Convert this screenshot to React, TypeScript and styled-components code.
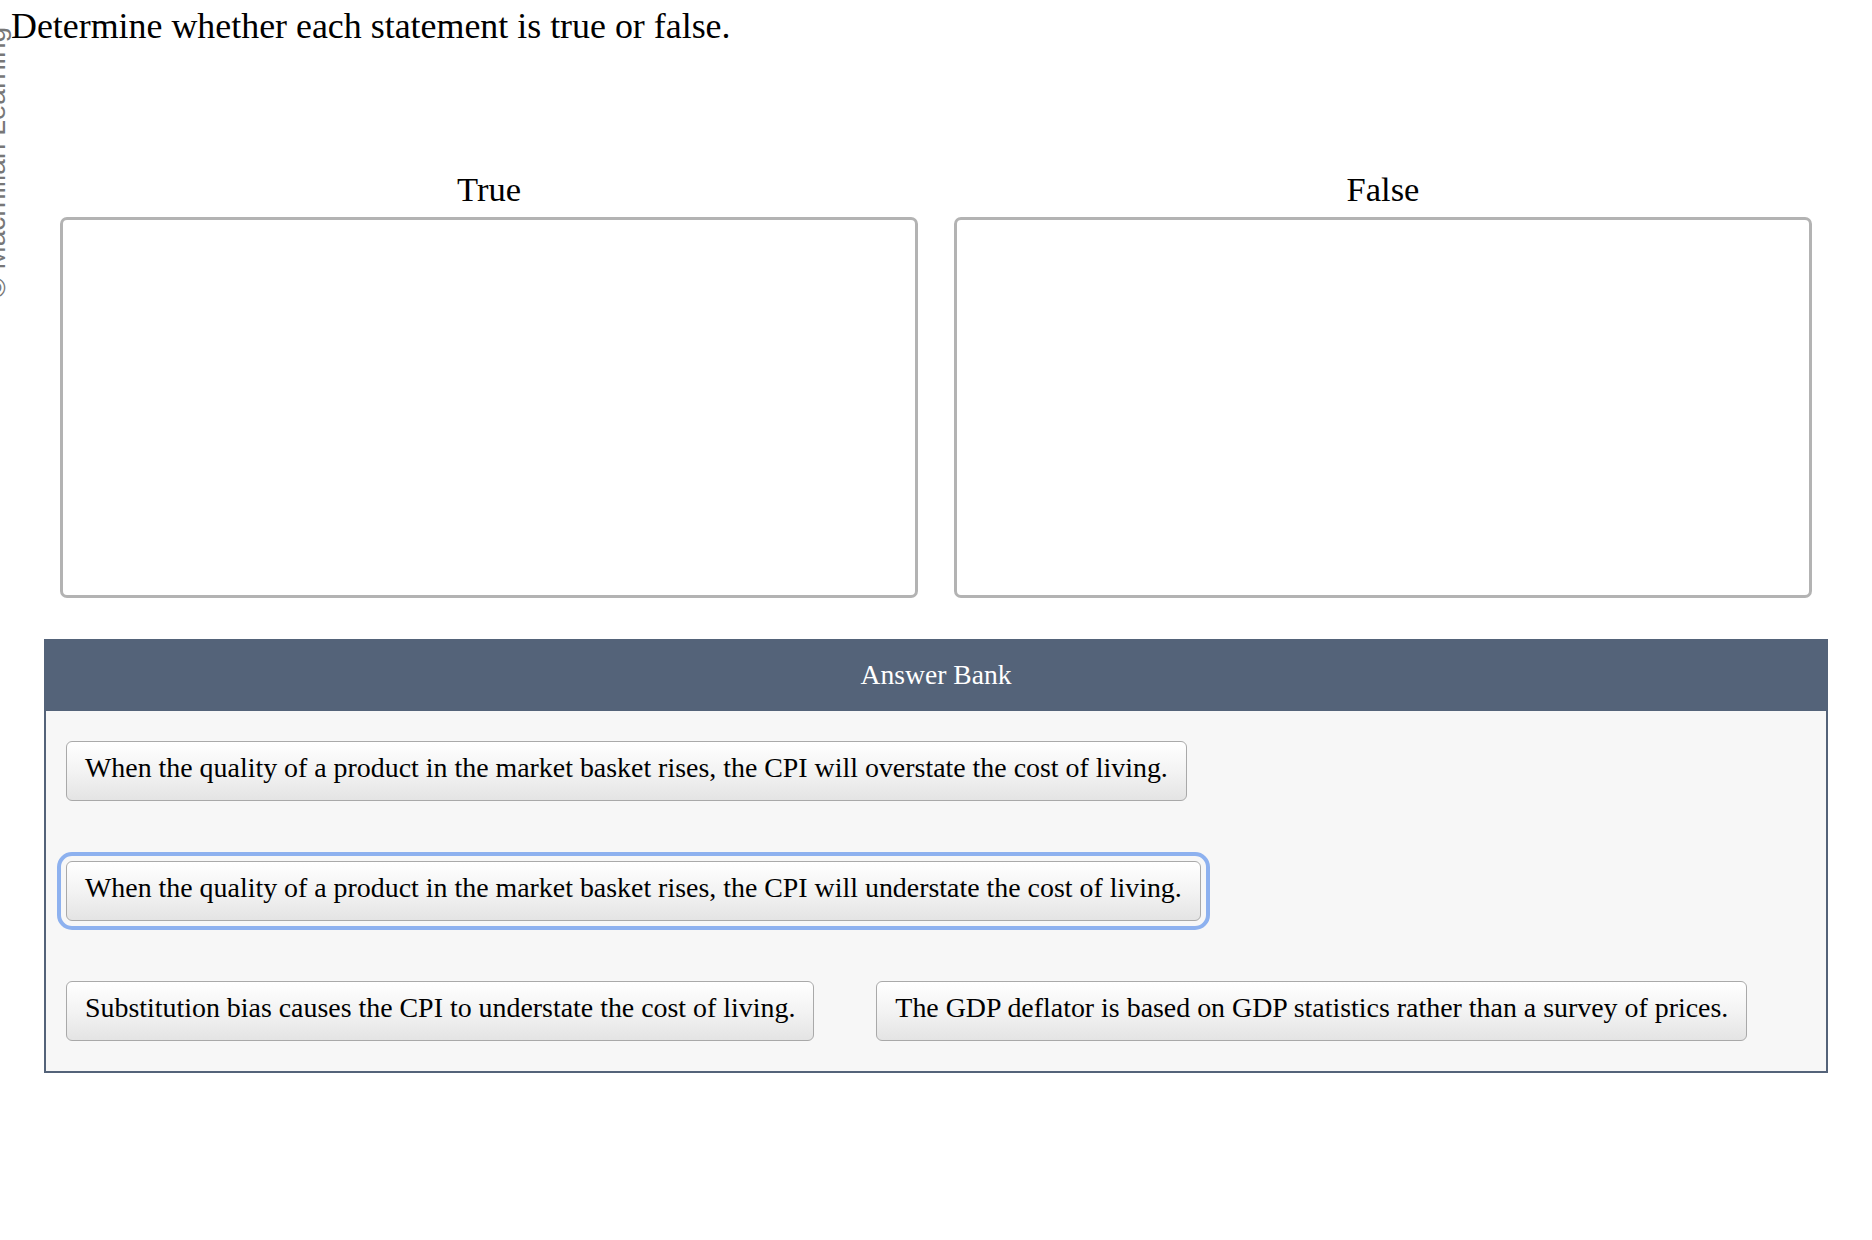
import styled, { createGlobalStyle } from "styled-components"

const GlobalStyle = createGlobalStyle`
	html, body {
		margin: 0;
		padding: 0;
		background: #ffffff;
	}

	body {
		font-family: "Liberation Serif", "Times New Roman", serif;
		color: #000000;
		overflow: hidden;
	}
`

const columns = ["True", "False"]

const answers = [
	{ id: 1, text: "When the quality of a product in the market basket rises, the CPI will overstate the cost of living." },
	{ id: 2, text: "When the quality of a product in the market basket rises, the CPI will understate the cost of living.", focused: true },
	{ id: 3, text: "Substitution bias causes the CPI to understate the cost of living." },
	{ id: 4, text: "The GDP deflator is based on GDP statistics rather than a survey of prices." }
]

const App = () => {
	return (
		<Page>
			<GlobalStyle />
			<Watermark>© Macmillan Learning</Watermark>
			<Prompt>Determine whether each statement is true or false.</Prompt>

			<Columns>
				{columns.map((label) => (
					<Column key={label}>
						<ColumnLabel>{label}</ColumnLabel>
						<DropZone />
					</Column>
				))}
			</Columns>

			<AnswerBank>
				<BankHeader>Answer Bank</BankHeader>
				<BankBody>
					{answers.map((answer) => (
						<Chip key={answer.id} type="button" $focused={answer.focused}>
							{answer.text}
						</Chip>
					))}
				</BankBody>
			</AnswerBank>
		</Page>
	)
}

export default App

const Page = styled.div`
	position: relative;
	min-height: 1240px;
	padding-top: 5px;
	box-sizing: border-box;
`

// rotated copyright line, mostly hidden past the left edge
const Watermark = styled.span`
	position: absolute;
	top: 298px;
	left: -20px;
	transform-origin: 0 0;
	transform: rotate(-90deg);
	white-space: nowrap;
	font-family: "Liberation Sans", Arial, sans-serif;
	font-size: 28px;
	color: #777777;
`

const Prompt = styled.h1`
	margin: 0 0 0 11px;
	font-size: 35.9px;
	font-weight: 400;
	line-height: normal;
`

const Columns = styled.div`
	display: grid;
	grid-template-columns: 1fr 1fr;
	column-gap: 36px;
	margin: 123px 60px 0;
`

const Column = styled.div`
	display: flex;
	flex-direction: column;
`

const ColumnLabel = styled.div`
	margin-bottom: 8px;
	font-size: 34.5px;
	line-height: normal;
	text-align: center;
`

const DropZone = styled.div`
	height: 381px;
	box-sizing: border-box;
	border: 3px solid #b3b3b3;
	border-radius: 7px;
	background: #ffffff;
`

const AnswerBank = styled.section`
	margin: 41px 44px 0;
	border: 2px solid #546379;
	border-top: none;
	background: #f7f7f7;
`

const BankHeader = styled.div`
	display: flex;
	align-items: center;
	justify-content: center;
	height: 72px;
	margin: 0 -2px;
	background: #546379;
	color: #ffffff;
	font-size: 27.6px;
`

const BankBody = styled.div`
	display: flex;
	flex-wrap: wrap;
	align-items: flex-start;
	row-gap: 60px;
	column-gap: 62px;
	padding: 30px 20px;
`

const Chip = styled.button<{ $focused?: boolean }>`
	height: 60px;
	box-sizing: border-box;
	padding: 9px 18px 16px 18px;
	border: 1.5px solid #a9a9a9;
	border-radius: 6px;
	background: linear-gradient(to bottom, #ffffff 0%, #f3f3f3 50%, #e4e4e4 100%);
	font-family: "Liberation Serif", "Times New Roman", serif;
	font-size: 27.9px;
	line-height: normal;
	color: #000000;
	white-space: nowrap;
	text-align: left;
	cursor: grab;
	outline: ${(p) => (p.$focused ? "4.5px solid #8db1ef" : "none")};
	outline-offset: 5px;
`
